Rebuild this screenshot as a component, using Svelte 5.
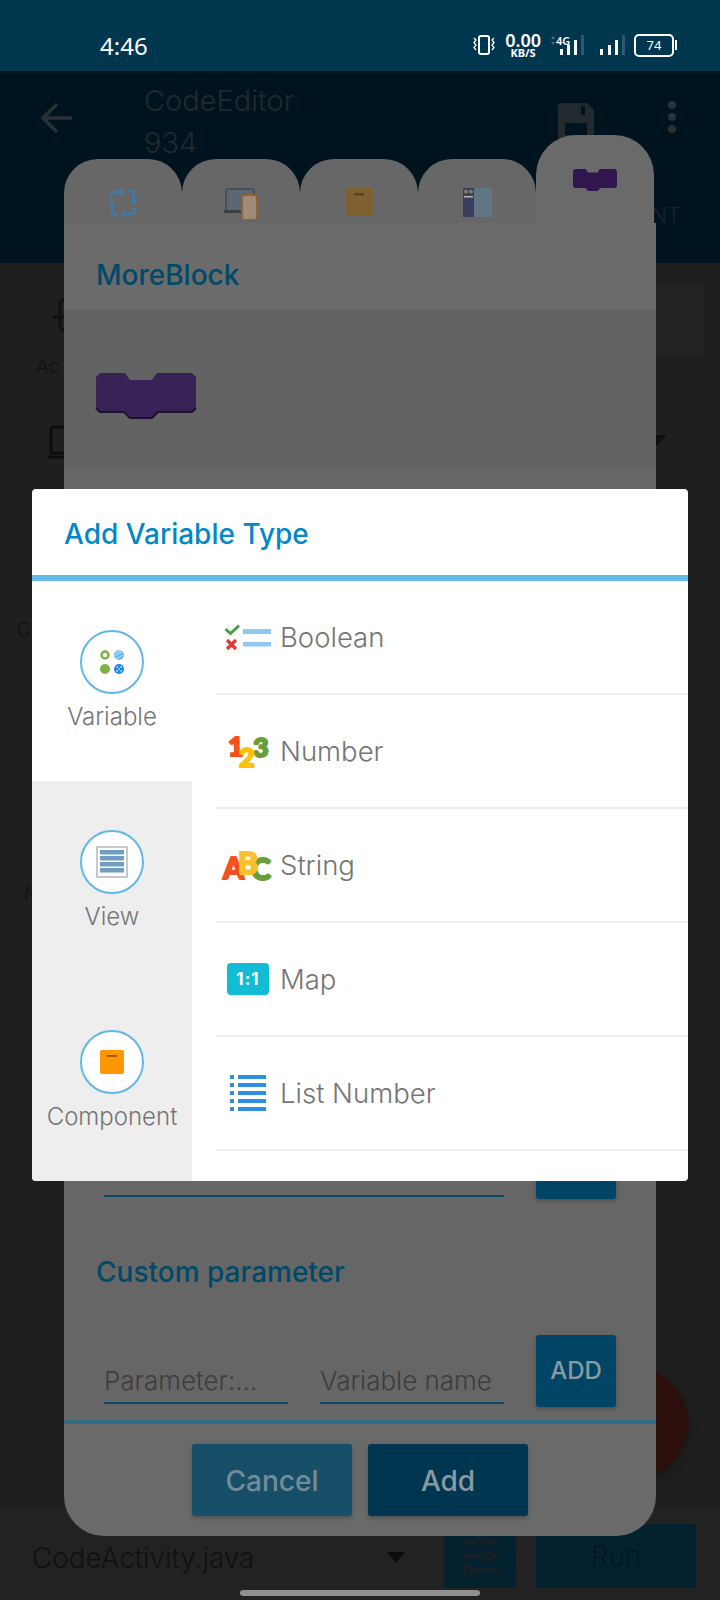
<script>
	const sideItems = [
		{ label: 'Variable', icon: 'variable', active: true },
		{ label: 'View', icon: 'view', active: false },
		{ label: 'Component', icon: 'component', active: false }
	];
	const types = [
		{ label: 'Boolean', icon: 'boolean' },
		{ label: 'Number', icon: 'number' },
		{ label: 'String', icon: 'string' },
		{ label: 'Map', icon: 'map' },
		{ label: 'List Number', icon: 'list' }
	];
	const tabs = ['cycle', 'device', 'box', 'panel'];
	const blockPath = 'M4 0H29L34 7H56L61 0H96L100 4V35L96 39H62L56 45H34L28 39H4L0 35V4Z';
	const blockEdge = 'M0 35L4 39H28L34 45H56L62 39H96L100 35';
</script>

<div class="page">
	<header class="status">
		<span class="time">4:46</span>
		<div class="status-icons">
			<svg width="26" height="22" viewBox="0 0 26 22" fill="none" stroke="#fff">
				<rect x="8" y="2" width="10" height="18" rx="2" stroke-width="2" />
				<path d="M3 4l2 2-2 2.500 2 2.500-2 2.500 2 2.500M23 4l-2 2 2 2.500-2 2.500 2 2.500-2 2.500" stroke-width="1.300" />
			</svg>
			<div class="speed"><b>0.00</b><small>KB/S</small></div>
			<svg class="signal-a" width="38" height="22" viewBox="0 0 38 22">
				<path d="M3 5l2-3 2 3zM3 8l2 3 2-3z" fill="#4c7386" />
				<text x="8" y="11" class="net">4G</text>
				<rect x="12" y="15" width="3" height="6" fill="#fff" />
				<rect x="19" y="11" width="3" height="10" fill="#fff" />
				<rect x="26" y="6" width="3" height="15" fill="#fff" />
				<rect x="33" y="1" width="3" height="20" fill="#2d5a70" />
			</svg>
			<svg class="signal-b" width="27" height="22" viewBox="0 0 27 22">
				<rect x="1" y="15" width="3" height="6" fill="#fff" />
				<rect x="9" y="11" width="3" height="10" fill="#fff" />
				<rect x="16" y="6" width="3" height="15" fill="#fff" />
				<rect x="23" y="1" width="3" height="20" fill="#2d5a70" />
			</svg>
			<div class="battery"><span>74</span></div>
		</div>
	</header>

	<section class="appbar">
		<svg class="back" width="32" height="32" viewBox="0 0 32 32" fill="none" stroke="#2a3135" stroke-width="3.500">
			<path d="M32 16H3M17 2L3 16l14 14" />
		</svg>
		<div class="appbar-title">
			<div>CodeEditor</div>
			<div>934</div>
		</div>
		<svg class="save" width="38" height="38" viewBox="0 0 38 38" fill="#222a2e">
			<path d="M4 1H30L37 8V37H1V4Q1 1 4 1ZM24 4V13H28V4ZM8 21V33H30V21Z" fill-rule="evenodd" />
		</svg>
		<div class="dots"><i></i><i></i><i></i></div>
		<span class="behind-tab">NT</span>
	</section>

	<main class="behind">
		<div class="behind-top">
			<div class="behind-activity">
				<svg width="18" height="36" viewBox="0 0 18 36" fill="none" stroke="#111" stroke-width="3"><path d="M18 2Q10 2 8 6V28Q8 34 18 34" /><path d="M1 20H18" /></svg>
				<span>Ac</span>
			</div>
			<div class="behind-box"></div>
		</div>
		<div class="behind-device">
			<svg width="24" height="34" viewBox="0 0 24 34" fill="none" stroke="#0d0d0d" stroke-width="3"><path d="M24 2H6Q3 2 3 5V28H24M0 32H24" /></svg>
			<i class="caret"></i>
		</div>
		<span class="behind-c">C</span>
		<span class="behind-n">N</span>
		<div class="fab"></div>
	</main>

	<footer class="bottom">
		<span class="file">CodeActivity.java</span>
		<i class="file-caret"></i>
		<div class="tune">
			<svg width="40" height="40" viewBox="0 0 40 40" fill="none" stroke="#1f1f1f" stroke-width="2.500">
				<path d="M1 6H40M1 20H40M1 34H40" />
				<circle cx="19" cy="6" r="4" fill="#04212f" />
				<circle cx="30" cy="20" r="4" fill="#04212f" />
				<circle cx="8" cy="34" r="4" fill="#04212f" />
			</svg>
		</div>
		<div class="run">Run</div>
	</footer>
	<div class="home"></div>

	<!-- blocks sheet, dimmed -->
	<div class="sheet">
		<div class="tabs">
			{#each tabs as tab}
				<div class="tab">
					{#if tab === 'cycle'}
						<svg width="30" height="30" viewBox="0 0 30 30" fill="none" stroke="#3f7ba8" stroke-width="2.500">
							{#each [0, 90, 180, 270] as r}
								<g transform="rotate({r} 15 15)">
									<path d="M3 10V8Q3 4 7 4H12" />
									<path d="M12 0L17 4L12 8Z" fill="#3f7ba8" stroke="none" />
								</g>
							{/each}
						</svg>
					{:else if tab === 'device'}
						<svg width="34" height="32" viewBox="0 0 34 32">
							<rect x="2" y="1" width="28" height="22" rx="2" fill="#5b6874" stroke="#4a4f54" stroke-width="2" />
							<rect x="0" y="22" width="20" height="3" fill="#3b3f42" />
							<rect x="18" y="7" width="15" height="25" rx="3" fill="#a08a78" stroke="#93622f" stroke-width="2" />
						</svg>
					{:else if tab === 'box'}
						<svg width="28" height="28" viewBox="0 0 28 28">
							<rect width="28" height="28" rx="2" fill="#805f30" />
							<rect x="9" y="5" width="10" height="2.500" fill="#5a4322" />
						</svg>
					{:else}
						<svg width="29" height="29" viewBox="0 0 29 29">
							<rect width="29" height="29" fill="#607680" />
							<rect width="11" height="29" fill="#3b3d60" />
							<circle cx="3" cy="3.500" r="2" fill="#807e52" />
							<circle cx="8" cy="3.500" r="2" fill="#807e52" />
							<rect x="1" y="8" width="9" height="1.500" fill="#b5b5b5" />
						</svg>
					{/if}
				</div>
			{/each}
			<div class="tab selected">
				<svg width="44" height="22" viewBox="0 0 100 45" preserveAspectRatio="none">
					<path d={blockPath} fill="#31164f" />
				</svg>
			</div>
		</div>

		<div class="sheet-head"><h2>MoreBlock</h2></div>
		<div class="sheet-preview">
			<svg class="block" width="100" height="45" viewBox="0 0 100 45">
				<path d={blockPath} fill="#382356" />
				<path d={blockEdge} fill="none" stroke="#1d1030" stroke-width="2" />
			</svg>
		</div>
		<div class="sheet-body">
			<div class="field-row first">
				<div class="field wide"></div>
				<div class="small-btn">ADD</div>
			</div>
			<h2 class="custom">Custom parameter</h2>
			<div class="field-row">
				<div class="field half">Parameter:…</div>
				<div class="field half">Variable name</div>
				<div class="small-btn">ADD</div>
			</div>
		</div>
		<div class="sheet-actions">
			<div class="btn cancel">Cancel</div>
			<div class="btn add">Add</div>
		</div>
	</div>

	<!-- dialog on top -->
	<div class="dialog">
		<h1>Add Variable Type</h1>
		<div class="dialog-body">
			<nav class="side">
				{#each sideItems as item}
					<div class="side-item" class:active={item.active}>
						<div class="circle">
							{#if item.icon === 'variable'}
								<svg width="32" height="32" viewBox="0 0 32 32">
									<circle cx="9" cy="9" r="3.500" fill="none" stroke="#7cb342" stroke-width="2.500" />
									<circle cx="23" cy="9" r="5" fill="#64b5f6" />
									<path d="M19 7l6-3M18.500 10l8-4.500M20 13l7-4" stroke="#fff" stroke-width=".7" />
									<circle cx="9" cy="23" r="5" fill="#7cb342" />
									<circle cx="23" cy="23" r="5" fill="#1e88e5" />
									<path d="M21 21h.1M25 21h.1M23 23h.1M21 25h.1M25 25h.1" stroke="#fff" stroke-width="1.500" stroke-linecap="round" />
								</svg>
							{:else if item.icon === 'view'}
								<svg width="32" height="32" viewBox="0 0 32 32">
									<rect x="1" y="1" width="30" height="30" fill="#fff" stroke="#c8c8c8" stroke-width="2" />
									<rect x="4" y="4" width="24" height="4.500" fill="#6f9dc4" />
									<rect x="4" y="10" width="24" height="4.500" fill="#6f9dc4" />
									<rect x="4" y="16" width="24" height="4.500" fill="#6f9dc4" />
									<rect x="4" y="22" width="24" height="4.500" fill="#6f9dc4" />
								</svg>
							{:else}
								<svg width="24" height="24" viewBox="0 0 24 24">
									<rect width="24" height="24" rx="2" fill="#ff9800" />
									<rect x="7" y="5" width="10" height="2" fill="#a15c06" />
								</svg>
							{/if}
						</div>
						<span>{item.label}</span>
					</div>
				{/each}
			</nav>
			<div class="types">
				{#each types as type}
					<div class="type-row">
						<div class="type-icon">
							{#if type.icon === 'boolean'}
								<svg width="48" height="28" viewBox="0 0 48 28">
									<path d="M1.500 6L6.500 10.500L15 2.500" fill="none" stroke="#43a047" stroke-width="3" />
									<path d="M3 17l9 9M12 17l-9 9" fill="none" stroke="#e53935" stroke-width="3.400" />
									<rect x="19" y="6" width="28" height="5" fill="#90caf0" />
									<rect x="19" y="19" width="28" height="4.500" fill="#90caf0" />
								</svg>
							{:else if type.icon === 'number'}
								<svg class="toys" width="42" height="36" viewBox="0 0 42 36">
									<text x="26" y="24" class="toy" fill="#689f38" stroke="#689f38">3</text>
									<text x="1" y="23" class="toy" fill="#f4511e" stroke="#f4511e">1</text>
									<text x="12" y="34" class="toy" fill="#ffc107" stroke="#ffc107">2</text>
								</svg>
							{:else if type.icon === 'string'}
								<svg class="toys" width="50" height="32" viewBox="0 0 50 32">
									<text x="28" y="31" class="toy wide-toy" fill="#689f38" stroke="#689f38">C</text>
									<text x="0" y="30" class="toy wide-toy" fill="#f4511e" stroke="#f4511e">A</text>
									<text x="15" y="25" class="toy wide-toy" fill="#fbc02d" stroke="#fbc02d">B</text>
								</svg>
							{:else if type.icon === 'map'}
								<div class="map-chip">1:1</div>
							{:else}
								<svg width="38" height="36" viewBox="0 0 38 36" fill="#2f8fe0">
									{#each [0, 8, 16, 24, 32] as y}
										<rect x="1" {y} width="4" height="4" />
										<rect x="9" {y} width="28" height="4" />
									{/each}
								</svg>
							{/if}
						</div>
						<span>{type.label}</span>
					</div>
				{/each}
			</div>
		</div>
	</div>
</div>

<style>
	:global(body) {
		background: #1f1f1f;
	}

	.page {
		position: relative;
		width: 720px;
		height: 1600px;
		overflow: hidden;
		display: flex;
		flex-direction: column;
		background: #1f1f1f;
		font-family: Inter, "Noto Sans", sans-serif;
		font-weight: 300;
	}

	.status {
		height: 71px;
		flex: none;
		display: flex;
		align-items: center;
		justify-content: space-between;
		padding: 19px 46px 0 100px;
		box-sizing: border-box;
		background: #01364f;
		color: #fff;
	}

	.time {
		font-size: 24px;
		font-weight: 400;
		font-family: "Noto Sans", sans-serif;
	}

	.status-icons {
		display: flex;
		align-items: center;
	}

	.speed {
		display: flex;
		flex-direction: column;
		align-items: center;
		margin: 0 0 0 8px;
		line-height: 1;
		font-family: "Noto Sans", sans-serif;
	}

	.speed b {
		font-size: 18px;
		font-weight: 600;
		line-height: 15px;
	}

	.speed small {
		font-size: 11px;
		font-weight: 700;
		line-height: 10px;
	}

	.signal-a {
		margin-left: 7px;
	}

	.signal-b {
		margin-left: 13px;
	}

	.net {
		font: 600 11px "Noto Sans", sans-serif;
		fill: #fff;
	}

	.battery {
		position: relative;
		margin-left: 8px;
		width: 36px;
		height: 19px;
		border: 2px solid #fff;
		border-radius: 5px;
		display: flex;
		align-items: center;
		justify-content: center;
		font: 13px "Noto Sans", sans-serif;
	}

	.battery::after {
		content: '';
		position: absolute;
		right: -5px;
		top: 4px;
		width: 2px;
		height: 10px;
		background: #fff;
	}

	.appbar {
		position: relative;
		height: 192px;
		flex: none;
		display: flex;
		align-items: flex-start;
		padding: 6px 45px 0 40px;
		box-sizing: border-box;
		background: #00141f;
	}

	.back {
		margin-top: 25px;
	}

	.appbar-title {
		margin-left: 72px;
		padding-top: 3px;
		flex: 1;
		font-size: 29px;
		line-height: 42px;
		color: #23292d;
	}

	.save {
		margin-top: 25px;
	}

	.dots {
		margin: 24px -1px 0 73px;
		display: flex;
		flex-direction: column;
		gap: 4px;
	}

	.dots i {
		width: 8px;
		height: 8px;
		border-radius: 50%;
		background: #2b3236;
	}

	.behind-tab {
		position: absolute;
		left: 651px;
		top: 132px;
		font-size: 21px;
		color: #1c2327;
	}

	.behind {
		position: relative;
		flex: 1;
		padding: 20px 16px 0 36px;
	}

	.behind-top {
		display: flex;
		align-items: flex-start;
		justify-content: space-between;
	}

	.behind-activity {
		display: flex;
		flex-direction: column;
		gap: 22px;
		padding-top: 14px;
		font-size: 19px;
		line-height: 24px;
		color: #111;
	}

	.behind-activity svg {
		margin-left: 16px;
	}

	.behind-box {
		width: 48px;
		height: 72px;
		background: #232323;
		border-radius: 3px;
	}

	.behind-device {
		display: flex;
		justify-content: space-between;
		margin: 46px 38px 0 12px;
	}

	.caret {
		width: 0;
		height: 0;
		margin-top: 10px;
		border: 9px solid transparent;
		border-top: 11px solid #0e0e0e;
		border-bottom: 0;
	}

	.behind-c,
	.behind-n {
		position: absolute;
		left: 17px;
		font-size: 18px;
		color: #0f0f0f;
	}

	.behind-c {
		top: 356px;
	}

	.behind-n {
		left: 24px;
		top: 620px;
	}

	.fab {
		position: absolute;
		left: 576px;
		top: 1104px;
		width: 112px;
		height: 112px;
		border-radius: 50%;
		background: #2a0f0c;
		box-shadow: 0 4px 10px rgba(0, 0, 0, 0.3);
	}

	.bottom {
		position: absolute;
		left: 0;
		right: 0;
		bottom: 0;
		height: 90px;
		display: flex;
		align-items: flex-start;
		padding: 14px 24px 0 32px;
		box-sizing: border-box;
		background: #222;
	}

	.file {
		width: 355px;
		font-size: 27.800px;
		line-height: 68px;
		color: #111;
	}

	.file-caret {
		width: 0;
		height: 0;
		margin-top: 28px;
		border: 9px solid transparent;
		border-top: 11px solid #0c0c0c;
		border-bottom: 0;
	}

	.tune {
		width: 72px;
		height: 64px;
		margin-left: 39px;
		display: flex;
		align-items: center;
		justify-content: center;
		background: #04212f;
		border-radius: 3px;
	}

	.run {
		width: 160px;
		height: 64px;
		margin-left: 20px;
		text-align: center;
		font-size: 28px;
		line-height: 64px;
		color: #011722;
		background: #04212f;
		border-radius: 3px;
	}

	.home {
		position: absolute;
		left: 240px;
		bottom: 4px;
		width: 240px;
		height: 6px;
		border-radius: 3px;
		background: #8f8f8f;
	}

	.sheet {
		position: absolute;
		left: 64px;
		top: 135px;
		width: 592px;
		height: 1401px;
		display: flex;
		flex-direction: column;
		border-radius: 0 0 40px 40px;
		overflow: hidden;
	}

	.tabs {
		height: 88px;
		flex: none;
		display: flex;
		align-items: flex-end;
	}

	.tab {
		width: 118px;
		height: 64px;
		display: flex;
		justify-content: center;
		padding-top: 29px;
		box-sizing: border-box;
		background: #676767;
		border-radius: 34px 34px 0 0;
	}

	.tab.selected {
		height: 88px;
		padding-top: 34px;
		background: #6a6a6a;
		border-radius: 40px 40px 0 0;
	}

	.sheet-head {
		height: 86px;
		flex: none;
		box-sizing: border-box;
		padding: 33px 32px 0;
		background: #6b6b6b;
	}

	h2 {
		margin: 0;
		font-size: 28px;
		line-height: 38px;
		font-weight: 500;
		color: #004a69;
	}

	.sheet-preview {
		height: 160px;
		flex: none;
		box-sizing: border-box;
		padding: 64px 32px 0;
		background: #636363;
	}

	.block {
		display: block;
		overflow: visible;
	}

	.sheet-body {
		flex: 1;
		padding: 0 40px;
		background: #666;
	}

	.field-row {
		display: flex;
		align-items: flex-end;
		gap: 32px;
	}

	.field-row.first {
		margin-top: 656px;
		height: 72px;
	}

	.field-row.first .small-btn {
		margin-bottom: -2px;
	}

	.custom {
		margin: 56px 0 44px -8px;
	}

	.field {
		height: 47px;
		box-sizing: border-box;
		font-size: 26px;
		line-height: 48px;
		white-space: nowrap;
		color: #3d3d3d;
		border-bottom: 2px solid #0b4a66;
	}

	.wide {
		width: 400px;
	}

	.half {
		width: 184px;
	}

	.small-btn {
		width: 80px;
		height: 72px;
		flex: none;
		margin-bottom: -3px;
		text-align: center;
		font-size: 24px;
		font-weight: 500;
		line-height: 72px;
		color: #8a9aa3;
		background: #004566;
		border-radius: 3px;
		box-shadow: 0 2px 4px rgba(0, 0, 0, 0.25);
	}

	.sheet-actions {
		height: 116px;
		flex: none;
		box-sizing: border-box;
		display: flex;
		justify-content: center;
		gap: 16px;
		padding-top: 20px;
		background: #6a6a6a;
		border-top: 4px solid #336b85;
	}

	.btn {
		width: 160px;
		height: 72px;
		text-align: center;
		font-size: 28px;
		font-weight: 500;
		line-height: 74px;
		border-radius: 3px;
		box-shadow: 0 2px 4px rgba(0, 0, 0, 0.25);
	}

	.cancel {
		color: #748c99;
		background: #174f68;
	}

	.add {
		color: #8a9aa3;
		background: #00364f;
	}

	.dialog {
		position: absolute;
		left: 32px;
		top: 489px;
		width: 656px;
		height: 692px;
		display: flex;
		flex-direction: column;
		overflow: hidden;
		background: #fff;
		border-radius: 4px;
	}

	h1 {
		height: 92px;
		flex: none;
		box-sizing: border-box;
		margin: 0;
		padding: 0 32px;
		font-size: 28px;
		font-weight: 500;
		line-height: 90px;
		color: #0288c7;
		border-bottom: 6px solid #64bbe8;
	}

	.dialog-body {
		flex: 1;
		display: flex;
		min-height: 0;
	}

	.side {
		width: 160px;
		flex: none;
		background: #eee;
	}

	.side-item {
		height: 200px;
		display: flex;
		flex-direction: column;
		align-items: center;
		padding-top: 49px;
		box-sizing: border-box;
		font-size: 24px;
		color: #757575;
	}

	.side-item.active {
		background: #fff;
	}

	.circle {
		width: 64px;
		height: 64px;
		margin-bottom: 8px;
		box-sizing: border-box;
		display: flex;
		align-items: center;
		justify-content: center;
		background: #fff;
		border: 2px solid #5fb8e6;
		border-radius: 50%;
	}

	.types {
		flex: 1;
		margin-left: 24px;
	}

	.type-row {
		height: 114px;
		box-sizing: border-box;
		display: flex;
		align-items: center;
		font-size: 27.500px;
		color: #757575;
		border-bottom: 2px solid #eee;
	}

	.type-icon {
		width: 64px;
		flex: none;
		display: flex;
		justify-content: center;
	}

	.toys {
		overflow: visible;
	}

	.toy {
		font: 900 27px Lato, sans-serif;
		stroke-width: 2;
		stroke-linejoin: round;
	}

	.wide-toy {
		font-size: 30px;
	}

	.map-chip {
		width: 42px;
		height: 32px;
		text-align: center;
		font-size: 17px;
		font-weight: 700;
		line-height: 32px;
		letter-spacing: 1px;
		color: #fff;
		background: #12bcd4;
		border-radius: 4px;
	}
</style>
